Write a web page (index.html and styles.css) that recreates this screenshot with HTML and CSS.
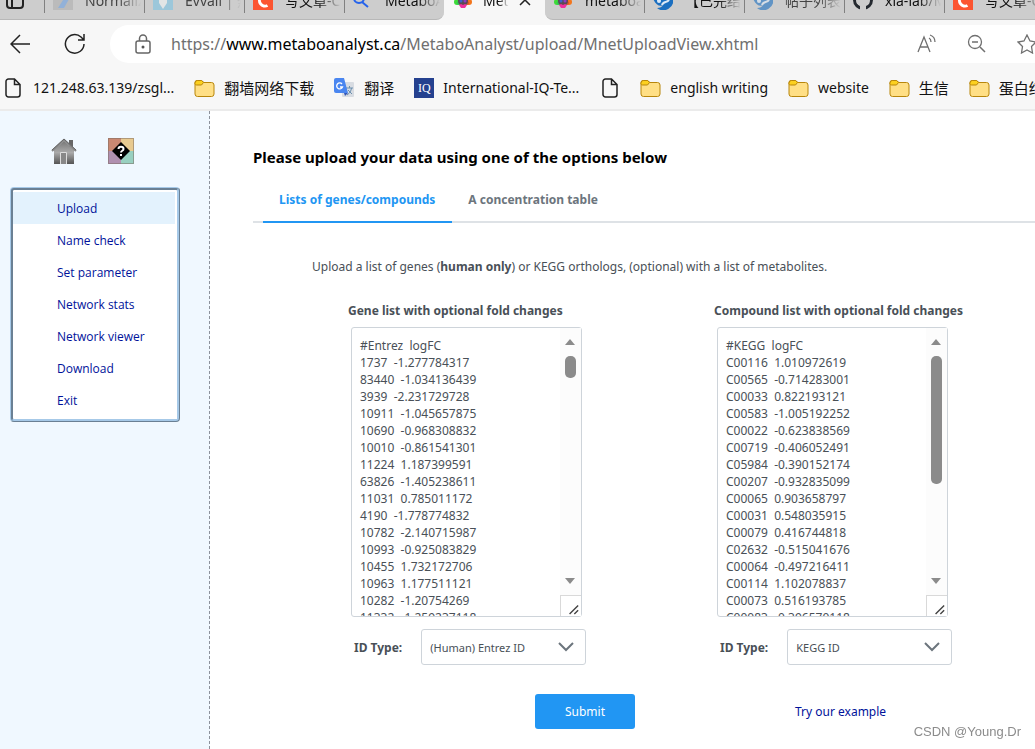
FILE: index.html
```html
<!DOCTYPE html>
<html lang="en">
<head>
  <meta charset="UTF-8">
  <title>MetaboAnalyst</title>
  <link rel="stylesheet" href="styles.css">
</head>

<body>

  <!-- shared icons -->
  <svg class="sprite" aria-hidden="true">
    <symbol id="folder" viewBox="0 0 21 20">
      <path d="M1 4.500a2 2 0 0 1 2-2h4.500l2.500 2h7.500a2.500 2.500 0 0 1 2.500 2.500v9a2.500 2.500 0 0 1-2.500 2.500h-14a2.500 2.500 0 0 1-2.500-2.500z" fill="#ffdf85" stroke="#b8860b"/>
      <path d="M1 5a2.500 2.500 0 0 1 2.500-2.500h4l2 2-2 2.500h-5a1.500 1.500 0 0 1-1.500-2z" fill="#fcd01f" stroke="#b8860b"/>
    </symbol>
    <symbol id="file" viewBox="0 0 16 20">
      <path d="M3.500 1h6l5.500 5.500v10a2.500 2.500 0 0 1-2.500 2.500h-9a2.500 2.500 0 0 1-2.500-2.500v-13a2.500 2.500 0 0 1 2.500-2.500zM9.500 1v5.500h5.500" fill="none" stroke="#222" stroke-width="1.500"/>
    </symbol>
    <symbol id="csdn" viewBox="0 0 20 20">
      <rect width="20" height="20" fill="#fc5531"/>
      <path d="M15 6a5.500 5.500 0 1 0-.5 9.500" fill="none" stroke="#fff" stroke-width="3"/>
    </symbol>
    <symbol id="metabo" viewBox="0 0 20 20">
      <circle cx="10" cy="4" r="4" fill="#f6c945"/>
      <circle cx="4" cy="12" r="3" fill="#3edb38"/>
      <circle cx="16" cy="12" r="3" fill="#f3751c"/>
      <circle cx="6" cy="13" r="2" fill="#2fc45a"/>
      <circle cx="14" cy="13" r="2" fill="#d8502a"/>
      <circle cx="10" cy="11" r="5" fill="#5d4a52"/>
      <circle cx="8" cy="11" r="1.500" fill="#3a63c8"/>
      <circle cx="12" cy="11" r="1.500" fill="#8d3ac8"/>
      <path d="M6 15l2-1 2 1 2-1 2 1-2 3H8z" fill="#f0309c"/>
    </symbol>
    <symbol id="swirl" viewBox="0 0 20 20">
      <path d="M0 8h20a10 10 0 0 1-16 10c3 0 5-1 6-3-3 2-8 0-10-7z" fill="currentColor"/>
      <path d="M4 0h12v9H4z" fill="currentColor"/>
      <circle cx="6" cy="11" r="2" fill="#dce9f6"/>
      <path d="M9 15c1-4 5-2 7-5" fill="none" stroke="#dce9f6" stroke-width="2"/>
    </symbol>
    <symbol id="chevron" viewBox="0 0 16 10">
      <path d="M1 1l7 7 7-7" fill="none" stroke="#6c757d" stroke-width="2"/>
    </symbol>
  </svg>

  <header class="browser">
    <div class="tabstrip">
      <div class="tab-group left">
        <div class="tab first">
          <svg width="20" height="20" viewBox="0 0 20 20"><rect x="2" y="1" width="16" height="17" rx="3" fill="none" stroke="#222" stroke-width="2"/><path d="M7 1v17" stroke="#222" stroke-width="2"/></svg>
        </div>
        <div class="tab faded">
          <svg width="20" height="20" viewBox="0 0 20 20"><rect width="20" height="20" fill="#b0b0b0"/><path d="M5 18L15 2h5L11 18z" fill="#6ba0e0"/></svg>
          <span>Normaliz</span>
        </div>
        <div class="tab faded">
          <svg width="20" height="20" viewBox="0 0 20 20"><rect width="20" height="20" fill="#7cc4e3"/><path d="M6 5h8v8l-4 6-4-6z" fill="#f0f5f6"/></svg>
          <span>Evvail | 热</span>
        </div>
        <div class="tab">
          <svg width="20" height="20"><use href="#csdn"/></svg>
          <span>写文章-CSDN</span>
        </div>
        <div class="tab last">
          <svg width="20" height="20" viewBox="0 0 20 20"><path d="M9 12l6 5" stroke="#2563eb" stroke-width="2"/><circle cx="6" cy="8" r="5" fill="none" stroke="#2563eb" stroke-width="2"/></svg>
          <span>MetaboAnalyst</span>
        </div>
      </div>
      <div class="tab active">
        <svg width="20" height="20"><use href="#metabo"/></svg>
        <span>Metabo</span>
        <svg class="close" width="12" height="12" viewBox="0 0 12 12"><path d="M1 1l10 10M11 1L1 11" stroke="#222" stroke-width="1.500"/></svg>
      </div>
      <div class="tab-group right">
        <div class="tab">
          <svg width="20" height="20"><use href="#metabo"/></svg>
          <span>metaboanalyst</span>
        </div>
        <div class="tab">
          <svg class="blue" width="20" height="20"><use href="#swirl"/></svg>
          <span>【已完结】</span>
        </div>
        <div class="tab faded">
          <svg class="blue" width="20" height="20"><use href="#swirl"/></svg>
          <span>帖子列表</span>
        </div>
        <div class="tab">
          <svg width="20" height="20" viewBox="0 0 20 20"><circle cx="10" cy="10" r="10" fill="#24292f"/><path d="M7 20v-4c-3-1-4-3-4-6 0-2 1-3 1-3V4l3 1h6l3-1v3s1 1 1 3c0 3-1 5-4 6v4z" fill="#cdcdcd"/><path d="M3 14c2 0 2 3 4 3" fill="none" stroke="#24292f"/></svg>
          <span>xia-lab/Meta</span>
        </div>
        <div class="tab last">
          <svg width="20" height="20"><use href="#csdn"/></svg>
          <span>写文章-CSDN</span>
        </div>
      </div>
    </div>

    <div class="toolbar">
      <button class="icon-btn" aria-label="Back">
        <svg width="20" height="20" viewBox="0 0 20 20"><path d="M20 10H1M10 1L1 10l9 9" fill="none" stroke="#222" stroke-width="1.500"/></svg>
      </button>
      <button class="icon-btn reload" aria-label="Reload">
        <svg width="22" height="22" viewBox="0 0 22 22"><path d="M20 11a9.300 9.300 0 1 1-3-7l3 3M20 1v6h-6" fill="none" stroke="#222" stroke-width="1.500"/></svg>
      </button>
      <div class="address">
        <svg width="16" height="20" viewBox="0 0 16 20"><rect x="1" y="7" width="14" height="12" rx="2" fill="none" stroke="#666" stroke-width="1.500"/><path d="M4.500 7V4.500a3.500 3.500 0 0 1 7 0V7" fill="none" stroke="#666" stroke-width="1.500"/><circle cx="8" cy="13" r="1.500" fill="#555"/></svg>
        <span class="url">https://<b>www.metaboanalyst.ca</b>/MetaboAnalyst/upload/MnetUploadView.xhtml</span>
        <div class="address-icons">
          <svg width="20" height="20" viewBox="0 0 20 20"><path d="M1 18L7 3l6 15M3 13h8M12 4c2 1 2 2 2 4M13 1c3 1 5 4 5 7" fill="none" stroke="#707070" stroke-width="1.300"/></svg>
          <svg width="20" height="20" viewBox="0 0 20 20"><circle cx="8" cy="8" r="6.500" fill="none" stroke="#707070" stroke-width="1.300"/><path d="M5 8h6M13 13l5 5" stroke="#707070" stroke-width="1.500"/></svg>
          <svg width="20" height="20" viewBox="0 0 20 20"><path d="M10 1l3 6 6 1-4.500 4.500 1 6.500-5.500-3-5.500 3 1-6.500L1 8l6-1z" fill="none" stroke="#707070" stroke-width="1.300"/></svg>
        </div>
      </div>
    </div>

    <nav class="bookmarks">
      <a href="#"><svg width="16" height="20"><use href="#file"/></svg><span class="after-file">121.248.63.139/zsgl...</span></a>
      <a href="#"><svg width="21" height="20"><use href="#folder"/></svg><span class="cjk">翻墙网络下载</span></a>
      <a href="#">
        <svg width="21" height="20" viewBox="0 0 21 20"><rect x="8" y="4" width="12" height="15" rx="1" fill="#d8dce2"/><path d="M12 10h7M15.500 8v2M13 17c3-2 4-4 4.500-7M14 12l4 4" stroke="#6b8fae" fill="none"/><path d="M2 0h8l4 15H2a2 2 0 0 1-2-2V2a2 2 0 0 1 2-2z" fill="#4a86f0"/><path d="M10 15h4l-3 3z" fill="#3457b5"/><path d="M8 6a3 3 0 1 0 .5 3H6" stroke="#fff" fill="none" stroke-width="1.300"/></svg>
        <span class="cjk">翻译</span>
      </a>
      <a href="#"><i class="iq">IQ</i><span>International-IQ-Te...</span></a>
      <a href="#" class="bare" aria-label="Bookmark"><svg width="16" height="20"><use href="#file"/></svg></a>
      <a href="#"><svg width="21" height="20"><use href="#folder"/></svg><span>english writing</span></a>
      <a href="#"><svg width="21" height="20"><use href="#folder"/></svg><span>website</span></a>
      <a href="#"><svg width="21" height="20"><use href="#folder"/></svg><span class="cjk">生信</span></a>
      <a href="#"><svg width="21" height="20"><use href="#folder"/></svg><span class="cjk">蛋白结构</span></a>
    </nav>
  </header>

  <div class="page">
    <aside class="sidebar">
      <div class="shortcuts">
        <a href="#" aria-label="Home">
          <svg width="26" height="26" viewBox="0 0 26 26">
            <defs><linearGradient id="metal" x1="0" y1="0" x2="0" y2="1"><stop offset="0" stop-color="#777"/><stop offset=".5" stop-color="#aaa"/><stop offset="1" stop-color="#555"/></linearGradient></defs>
            <path d="M18 2h4v7h-4z" fill="#666"/>
            <path d="M3 12l10-9 10 9v14H3z" fill="url(#metal)"/>
            <path d="M1 13L13 2l12 11" fill="none" stroke="#888" stroke-width="2"/>
            <path d="M1 12L13 1l12 11" fill="none" stroke="#666"/>
            <path d="M9.500 26V14.500h6V26" fill="#888" stroke="#ddd"/>
          </svg>
        </a>
        <a href="#" aria-label="Help">
          <svg width="26" height="26" viewBox="0 0 26 26">
            <path d="M0 0h13v13H0z" fill="#c98872"/><path d="M13 0h13v13H13z" fill="#e8ca90"/>
            <path d="M0 13h13v13H0z" fill="#b090b0"/><path d="M13 13h13v13H13z" fill="#98d0c0"/>
            <rect x=".5" y=".5" width="25" height="25" fill="none" stroke="#7a6a60" stroke-opacity=".5"/>
            <path d="M13 4l9 9-9 9-9-9z" fill="#000"/>
            <path d="M10.500 11c0-3 5-3 5 0 0 2-2.500 1.500-2.500 3.500M13 16v2" fill="none" stroke="#fff" stroke-width="2"/>
          </svg>
        </a>
      </div>
      <nav class="menu">
        <a href="#" class="current">Upload</a>
        <a href="#">Name check</a>
        <a href="#">Set parameter</a>
        <a href="#">Network stats</a>
        <a href="#">Network viewer</a>
        <a href="#">Download</a>
        <a href="#">Exit</a>
      </nav>
    </aside>

    <main class="content">
      <h1>Please upload your data using one of the options below</h1>

      <div class="view-tabs">
        <a href="#" class="selected">Lists of genes/compounds</a>
        <a href="#">A concentration table</a>
      </div>

      <form class="upload">
        <p>Upload a list of genes (<b>human only</b>) or KEGG orthologs, (optional) with a list of metabolites.</p>

        <div class="lists">
          <section>
            <label class="list-label" for="genes">Gene list with optional fold changes</label>
            <div class="list-box">
              <textarea id="genes">#Entrez  logFC
1737  -1.277784317
83440  -1.034136439
3939  -2.231729728
10911  -1.045657875
10690  -0.968308832
10010  -0.861541301
11224  1.187399591
63826  -1.405238611
11031  0.785011172
4190  -1.778774832
10782  -2.140715987
10993  -0.925083829
10455  1.732172706
10963  1.177511121
10282  -1.20754269
11332  -1.259237118</textarea>
              <div class="scrollbar"><i class="up"></i><i class="thumb short"></i><i class="down"></i></div>
              <svg class="grip" width="21" height="21" viewBox="0 0 21 21"><path d="M9 19l9-9M14 19l4-4" stroke="#444" stroke-width="1.500"/></svg>
            </div>
            <div class="id-type">
              <label for="gene-id">ID Type:</label>
              <div class="select">
                <select id="gene-id"><option>(Human) Entrez ID</option></select>
                <svg width="16" height="10"><use href="#chevron"/></svg>
              </div>
            </div>
          </section>

          <section>
            <label class="list-label" for="compounds">Compound list with optional fold changes</label>
            <div class="list-box">
              <textarea id="compounds">#KEGG  logFC
C00116  1.010972619
C00565  -0.714283001
C00033  0.822193121
C00583  -1.005192252
C00022  -0.623838569
C00719  -0.406052491
C05984  -0.390152174
C00207  -0.932835099
C00065  0.903658797
C00031  0.548035915
C00079  0.416744818
C02632  -0.515041676
C00064  -0.497216411
C00114  1.102078837
C00073  0.516193785
C00083  -0.396570118</textarea>
              <div class="scrollbar"><i class="up"></i><i class="thumb"></i><i class="down"></i></div>
              <svg class="grip" width="21" height="21" viewBox="0 0 21 21"><path d="M9 19l9-9M14 19l4-4" stroke="#444" stroke-width="1.500"/></svg>
            </div>
            <div class="id-type">
              <label for="compound-id">ID Type:</label>
              <div class="select">
                <select id="compound-id"><option>KEGG ID</option></select>
                <svg width="16" height="10"><use href="#chevron"/></svg>
              </div>
            </div>
          </section>
        </div>

        <div class="actions">
          <button type="button" class="submit">Submit</button>
          <a href="#">Try our example</a>
        </div>
      </form>
    </main>
  </div>

  <div class="watermark">CSDN @Young.Dr</div>

</body>
</html>
```

FILE: styles.css
```css
* {
  box-sizing: border-box;
}

body {
  margin: 0;
  min-height: 100vh;
  display: flex;
  flex-direction: column;
  overflow: hidden;
  font-family: "Noto Sans", "Noto Sans CJK SC", sans-serif;
  font-size: 12px;
  color: #495057;
  background: #fff;
}

a {
  color: #00129a;
  text-decoration: none;
}

svg {
  flex: none;
  display: block;
}

.sprite {
  position: absolute;
  width: 0;
  height: 0;
}

/* browser */
.browser {
  background: #f7f7f7;
  border-bottom: 2px solid #ebebeb;
}

.tabstrip {
  display: flex;
  height: 20px;
  font-size: 14px;
  color: #111;
}

.tab-group {
  display: flex;
  background: #cdcdcd;
  border-bottom: 1px solid #b8b8b8;
}

.tab-group.left {
  border-radius: 0 0 8px 0;
}

.tab-group.right {
  flex: 1;
  border-radius: 0 0 0 8px;
  overflow: hidden;
}

.tab {
  position: relative;
  flex: none;
  display: flex;
  align-items: center;
  gap: 12px;
  width: 100px;
  height: 40px;
  margin-top: -20px;
  padding: 0 4px 0 8px;
  overflow: hidden;
  white-space: nowrap;
}

.tab span {
  flex: 1;
  overflow: hidden;
  -webkit-mask-image: linear-gradient(to right, #000 60%, transparent);
  mask-image: linear-gradient(to right, #000 60%, transparent);
}

.tab-group .tab::after {
  content: "";
  position: absolute;
  right: 0;
  top: 20px;
  width: 1px;
  height: 13px;
  background: #808080;
}

.tab-group .last::after {
  display: none;
}

.tab.first {
  width: 45px;
  padding-left: 5px;
}

.tab.last {
  width: 99px;
}

.tab.active {
  width: 101px;
  gap: 10px;
  padding: 0 14px 0 9px;
}

.tab.faded {
  color: #444;
}

.tab.faded svg {
  opacity: 0.6;
}

.blue {
  color: #1b6fc0;
}

.toolbar {
  display: flex;
  align-items: center;
  height: 48px;
  padding-left: 10px;
}

.icon-btn {
  padding: 0;
  border: 0;
  background: none;
}

.reload {
  margin: 0 24px 0 34px;
}

.address {
  flex: 1;
  display: flex;
  align-items: center;
  height: 38px;
  padding-left: 25px;
  border-radius: 19px 0 0 19px;
  background: #fff;
  overflow: hidden;
}

.url {
  flex: 1;
  margin-left: 20px;
  font-size: 16px;
  color: #707070;
  white-space: nowrap;
}

.url b {
  font-weight: normal;
  color: #000;
}

.address-icons {
  display: flex;
  gap: 30px;
  margin-right: -2px;
}

.bookmarks {
  display: flex;
  align-items: center;
  gap: 20px;
  height: 41px;
  padding: 0 0 2px 5px;
  overflow: hidden;
}

.bookmarks a {
  flex: none;
  display: flex;
  align-items: center;
  gap: 9px;
  font-size: 14px;
  color: #111;
}

.bookmarks .bare {
  margin: 0 2px 0 3px;
}

.bookmarks .after-file {
  margin-left: 3px;
}

.bookmarks .cjk {
  font-size: 15px;
}

.iq {
  width: 20px;
  height: 20px;
  background: #25418f;
  color: #fff;
  font: 12px/20px "Liberation Serif", serif;
  text-align: center;
}

/* page */
.page {
  flex: 1;
  display: flex;
}

.sidebar {
  flex: none;
  width: 210px;
  padding: 27px 0 0 10px;
  background: #f0f8ff;
  border-right: 1px dashed #8c929c;
}

.shortcuts {
  display: flex;
  gap: 31px;
  padding-left: 41px;
}

.menu {
  width: 170px;
  margin-top: 23px;
  padding: 2px 2px 3px 0;
  border: 3px ridge #a6c9e8;
  border-radius: 4px;
  background: #fff;
  font-family: "Open Sans", sans-serif;
}

.menu a {
  display: block;
  padding: 2px 0 0 44px;
  line-height: 30px;
}

.menu .current {
  background: #e3f2fd;
}

.content {
  flex: 1;
  min-width: 0;
  padding: 34px 0 0 43px;
}

h1 {
  margin: 0;
  font-size: 15px;
  line-height: 24px;
  color: #000;
}

.view-tabs {
  display: flex;
  margin-top: 8px;
  padding-left: 10px;
  border-bottom: 2px solid #dee2e6;
}

.view-tabs a {
  margin-bottom: -2px;
  padding: 2px 17px 0 16px;
  border-bottom: 2px solid transparent;
  font-weight: bold;
  line-height: 42px;
  color: #6c757d;
}

.view-tabs .selected {
  color: #2196f3;
  border-color: #2196f3;
}

.upload {
  padding: 34px 0 0 59px;
}

.upload p {
  margin: 0;
  line-height: 20px;
}

.lists {
  display: grid;
  grid-template-columns: 1fr 1fr;
  column-gap: 45px;
  margin-top: 24px;
  padding-left: 36px;
}

.list-label {
  display: block;
  font-weight: bold;
  line-height: 20px;
}

.list-box {
  position: relative;
  width: 231px;
  margin: 6px 0 12px 3px;
}

textarea {
  display: block;
  width: 100%;
  height: 290px;
  padding: 9px 8px 0;
  border: 1px solid #ced4da;
  border-radius: 3px;
  outline: 0;
  resize: none;
  overflow: hidden;
  background: #fff;
  color: #495057;
  font: inherit;
  line-height: 17px;
}

.scrollbar {
  position: absolute;
  top: 1px;
  right: 1px;
  width: 21px;
  height: 267px;
  padding: 11px 0 11px 5px;
  display: flex;
  flex-direction: column;
  background: #fcfcfc;
}

.up,
.down {
  width: 0;
  border: 5px solid transparent;
}

.up {
  border-top: 0;
  border-bottom: 6px solid #8b8b8b;
}

.down {
  margin-top: auto;
  border-bottom: 0;
  border-top: 6px solid #8b8b8b;
}

.thumb {
  width: 11px;
  height: 128px;
  margin-top: 11px;
  border-radius: 5px;
  background: #8b8b8b;
}

.thumb.short {
  height: 22px;
}

.grip {
  position: absolute;
  right: 1px;
  bottom: 1px;
  border: 1px solid #d9d9d9;
  border-width: 1px 0 0 1px;
  background: #fff;
}

.id-type {
  display: flex;
  align-items: center;
  gap: 19px;
  padding-left: 6px;
}

.id-type label {
  font-weight: bold;
}

.select {
  position: relative;
}

.select svg {
  position: absolute;
  right: 12px;
  top: 13px;
  pointer-events: none;
}

select {
  display: block;
  width: 165px;
  height: 36px;
  padding: 0 8px;
  appearance: none;
  border: 1px solid #ced4da;
  border-radius: 3px;
  background: #fff;
  color: #495057;
  font: inherit;
  font-size: 11px;
}

.actions {
  display: flex;
  align-items: center;
  gap: 160px;
  margin-top: 29px;
  padding-left: 223px;
}

.submit {
  width: 100px;
  height: 35px;
  border: 0;
  border-radius: 3px;
  background: #2196f3;
  color: #fff;
  font: inherit;
}

.watermark {
  position: fixed;
  right: 14px;
  bottom: 8px;
  font: 13px/18px "Liberation Sans", sans-serif;
  color: #8c8c8c;
}
```
